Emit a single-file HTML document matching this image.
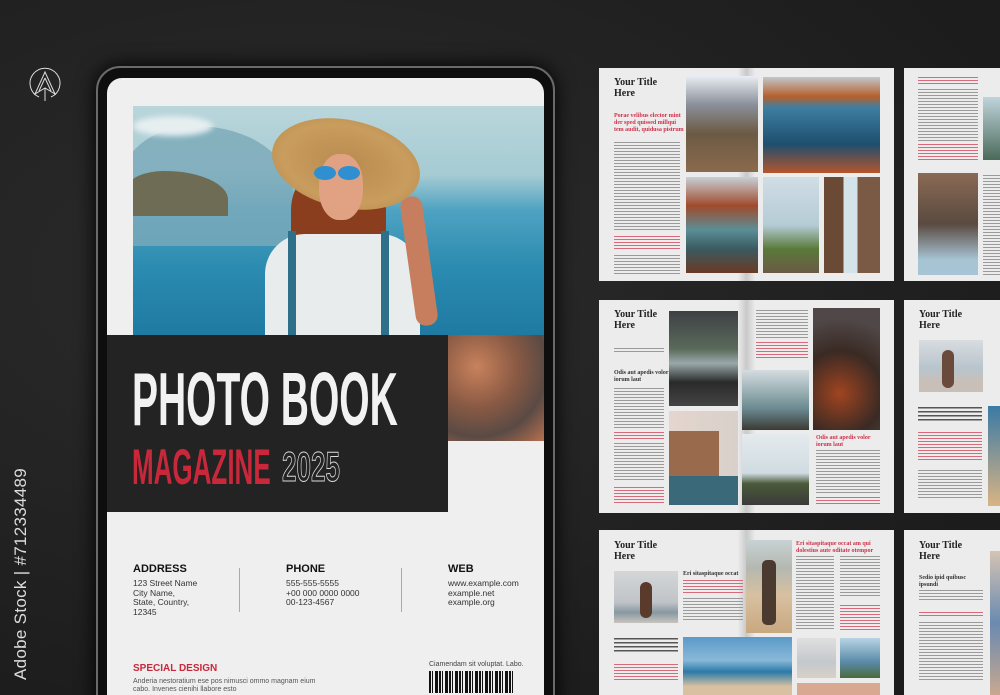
<!DOCTYPE html>
<html style="width:1000px;height:695px;overflow:hidden"><head><meta charset="utf-8"><style>
*{margin:0;padding:0;box-sizing:border-box}
body{width:1000px;height:695px;overflow:hidden;background:#232323;position:relative;font-family:"Liberation Sans",sans-serif}
.a{position:absolute}
.pg{position:absolute;background:#ececec}
.tx{position:absolute;background:repeating-linear-gradient(#9a9a9a 0 1px,transparent 1px 3px)}
.rt{position:absolute;background:repeating-linear-gradient(#d86a7c 0 1px,transparent 1px 3px)}
.bt{position:absolute;background:repeating-linear-gradient(#555 0 1.5px,transparent 1.5px 4px)}
.tt{position:absolute;font-family:"Liberation Serif",serif;font-weight:bold;font-size:10px;line-height:11px;color:#222}
.hd{position:absolute;font-family:"Liberation Serif",serif;font-weight:bold;font-size:6px;line-height:7px;color:#333}
.rh{position:absolute;font-family:"Liberation Serif",serif;font-weight:bold;font-size:6px;line-height:7px;color:#d0304a}
.p{position:absolute}
.big{position:absolute;font-family:"Liberation Sans",sans-serif;font-weight:bold;white-space:nowrap;transform-origin:0 0}
</style></head><body>
<div class="a" style="left:0;top:0;width:1000px;height:695px;background:radial-gradient(ellipse at 30% 40%,#2c2c2c,#1c1c1c 80%)"></div>
<svg class="a" style="left:28px;top:67px" width="34" height="36" viewBox="0 0 34 36"><g fill="none" stroke="#ddd" stroke-width="1"><path d="M11 30 A15 15 0 1 1 23 30"/><path d="M17 5 L7 27 L17 21 L27 27 Z"/><path d="M17 11 L11 24 M17 11 L23 24"/><path d="M17 21 V34"/></g></svg>
<div class="a" style="left:11px;top:680px;transform:rotate(-90deg);transform-origin:0 0;color:#ddd;font-size:17px;white-space:nowrap;width:230px;letter-spacing:.3px">Adobe Stock | #712334489</div>

<div class="a" style="left:96px;top:66px;width:459px;height:660px;border-radius:24px;background:#0e0e0e;border:2px solid #6a6a6a;box-shadow:0 0 20px #000"></div>
<div class="a" style="left:107px;top:78px;width:437px;height:640px;border-radius:15px;background:#efefef;overflow:hidden">
 <div class="a" style="left:26px;top:28px;width:411px;height:230px;background:linear-gradient(#b9d6db 0,#a6cbd3 30%,#4fa3c2 45%,#2b8bb0 70%,#1f7aa2 100%);overflow:hidden">
  <div class="a" style="left:-10px;top:20px;width:170px;height:120px;background:#7aa9b9;border-radius:60% 80% 0 0;opacity:.8"></div>
  <div class="a" style="left:0;top:10px;width:80px;height:20px;background:#e6eef0;border-radius:50%;filter:blur(3px)"></div>
  <div class="a" style="left:-5px;top:65px;width:100px;height:45px;background:#6e6c55;border-radius:40% 70% 0 0"></div>
  <div class="a" style="left:158px;top:60px;width:95px;height:110px;background:#8a3e1e;border-radius:40%"></div>
  <div class="a" style="left:132px;top:128px;width:155px;height:110px;background:#e8ecec;border-radius:40px 40px 0 0"></div>
  <div class="a" style="left:155px;top:125px;width:8px;height:105px;background:#2e6f8a"></div>
  <div class="a" style="left:248px;top:125px;width:8px;height:105px;background:#2e6f8a"></div>
  <div class="a" style="left:275px;top:90px;width:22px;height:130px;background:#c77e5e;border-radius:10px;transform:rotate(-8deg)"></div>
  <div class="a" style="left:138px;top:14px;width:150px;height:88px;background:radial-gradient(#b88a4e,#c99d5e 60%,#b48648);border-radius:50%;transform:rotate(12deg)"></div>
  <div class="a" style="left:186px;top:48px;width:44px;height:66px;background:#e0a283;border-radius:45%"></div>
  <div class="a" style="left:181px;top:60px;width:22px;height:14px;background:#2f8fd0;border-radius:50%"></div>
  <div class="a" style="left:205px;top:60px;width:22px;height:14px;background:#2f8fd0;border-radius:50%"></div>
 </div>
 <div class="a" style="left:341px;top:257px;width:96px;height:106px;background:radial-gradient(circle at 30% 30%,#c8825c,#8a5a44 40%,#5a4a44 70%,#b87050)"></div>
 <div class="a" style="left:0;top:257px;width:341px;height:177px;background:#232323"></div>
 <div class="big" style="left:25px;top:284px;color:#f2f2f2;font-size:75px;line-height:75px;transform:scaleX(.52)">PHOTO BOOK</div>
 <div class="big" style="left:25px;top:364px;color:#c8283a;font-size:50px;line-height:50px;transform:scaleX(.52)">MAGAZINE</div>
 <div class="big" style="left:175px;top:368px;color:transparent;-webkit-text-stroke:1px #ddd;font-size:42px;line-height:42px;transform:scaleX(.62)">2025</div>
 <div class="a" style="left:26px;top:485px;font-size:10px;line-height:13px;color:#333"><b style="font-size:11px;color:#111">ADDRESS</b><div style="margin-top:3px;line-height:9.5px;font-size:8.5px">123 Street Name<br>City Name,<br>State, Country,<br>12345</div></div>
 <div class="a" style="left:179px;top:485px;font-size:10px;line-height:13px;color:#333"><b style="font-size:11px;color:#111">PHONE</b><div style="margin-top:3px;line-height:9.5px;font-size:8.5px">555-555-5555<br>+00 000 0000 0000<br>00-123-4567</div></div>
 <div class="a" style="left:341px;top:485px;font-size:10px;line-height:13px;color:#333"><b style="font-size:11px;color:#111">WEB</b><div style="margin-top:3px;line-height:9.5px;font-size:8.5px">www.example.com<br>example.net<br>example.org</div></div>
 <div class="a" style="left:132px;top:490px;width:1px;height:44px;background:#aaa"></div>
 <div class="a" style="left:294px;top:490px;width:1px;height:44px;background:#aaa"></div>
 <div class="a" style="left:26px;top:585px;color:#c8283a;font-weight:bold;font-size:10px">SPECIAL DESIGN</div>
 <div class="a" style="left:26px;top:600px;color:#555;font-size:7px;line-height:8px">Anderia nestoratium ese pos nimusci ommo magnam eium<br>cabo. Invenes cienihi llabore esto</div>
 <div class="a" style="left:322px;top:583px;color:#444;font-size:7px">Ciamendam sit voluptat. Labo.</div>
 <div class="a" style="left:322px;top:593px;width:84px;height:22px;background:repeating-linear-gradient(90deg,#111 0 2px,transparent 2px 3px,#111 3px 4px,transparent 4px 6px,#111 6px 9px,transparent 9px 10px)"></div>
</div>

<!-- ROW 1 -->
<div class="pg" style="left:599px;top:68px;width:295px;height:213px;background:linear-gradient(90deg,#ececec 0,#ececec 47%,#c9c9c9 50%,#ececec 53%)"></div>
<div class="tt" style="left:614px;top:77px">Your Title<br>Here</div>
<div class="rh" style="left:614px;top:113px;width:70px">Porae velibus elector mint der sped quissed millqui tem audit, quidusa pistrum</div>
<div class="tx" style="left:614px;top:142px;width:66px;height:90px"></div>
<div class="rt" style="left:614px;top:236px;width:66px;height:14px"></div>
<div class="tx" style="left:614px;top:255px;width:66px;height:20px"></div>
<div class="p" style="left:686px;top:76px;width:72px;height:96px;background:linear-gradient(#e8eef2,#8a8f9a 30%,#6c5a44 60%,#8b6a4c)"></div>
<div class="p" style="left:686px;top:177px;width:72px;height:96px;background:linear-gradient(#c8d0d6,#a04a2c 30%,#5a8e96 55%,#3a5a60 75%,#6a3a24)"></div>
<div class="p" style="left:763px;top:77px;width:117px;height:96px;background:linear-gradient(#c0c8cc,#b8602c 20%,#3e7ea0 32%,#1e4e6e 70%,#b4552c)"></div>
<div class="p" style="left:763px;top:177px;width:56px;height:96px;background:linear-gradient(#d0dde4,#b5ccd6 50%,#5a7a3a 75%,#6a5a44)"></div>
<div class="p" style="left:824px;top:177px;width:56px;height:96px;background:linear-gradient(90deg,#6a4a34 0 35%,#d4e2ea 35% 60%,#7a5a44 60%)"></div>
<div class="pg" style="left:904px;top:68px;width:100px;height:213px"></div>
<div class="rt" style="left:918px;top:77px;width:60px;height:8px"></div>
<div class="tx" style="left:918px;top:89px;width:60px;height:52px"></div>
<div class="rt" style="left:918px;top:144px;width:60px;height:16px"></div>
<div class="p" style="left:918px;top:173px;width:60px;height:102px;background:linear-gradient(#8a6a54,#5a4a40 50%,#a7c4d4 85%)"></div>
<div class="p" style="left:983px;top:97px;width:17px;height:63px;background:linear-gradient(#c0d4dc,#4a6a5a)"></div>
<div class="tx" style="left:983px;top:175px;width:17px;height:100px"></div>

<!-- ROW 2 -->
<div class="pg" style="left:599px;top:300px;width:295px;height:213px;background:linear-gradient(90deg,#ececec 0,#ececec 47%,#c9c9c9 50%,#ececec 53%)"></div>
<div class="tt" style="left:614px;top:309px">Your Title<br>Here</div>
<div class="tx" style="left:614px;top:348px;width:50px;height:6px"></div>
<div class="hd" style="left:614px;top:370px;width:55px">Odis aut apedis volor iorum laut</div>
<div class="tx" style="left:614px;top:388px;width:50px;height:42px"></div>
<div class="rt" style="left:614px;top:432px;width:50px;height:8px"></div>
<div class="tx" style="left:614px;top:443px;width:50px;height:38px"></div>
<div class="rt" style="left:614px;top:487px;width:50px;height:18px"></div>
<div class="p" style="left:669px;top:311px;width:69px;height:95px;background:linear-gradient(#3e4044,#5a6a5a 40%,#9aa8aa 55%,#2a2a2a 75%,#444)"></div>
<div class="p" style="left:669px;top:411px;width:69px;height:94px;background:linear-gradient(90deg,#e4d6ce,#d8d0ca);"><div class="p" style="left:0;top:20px;width:50px;height:45px;background:#9a6a4c"></div><div class="p" style="left:0;top:65px;width:69px;height:29px;background:#3a6a7a"></div></div>
<div class="tx" style="left:756px;top:310px;width:52px;height:30px"></div>
<div class="rt" style="left:756px;top:342px;width:52px;height:18px"></div>
<div class="p" style="left:742px;top:370px;width:67px;height:60px;background:linear-gradient(#d4dce0,#8aa4a8 45%,#6a8890 65%,#3a3a34)"></div>
<div class="p" style="left:742px;top:434px;width:67px;height:71px;background:linear-gradient(#e4eaee,#d0dce2 55%,#4a5a3a 70%,#3a3a3a)"></div>
<div class="p" style="left:813px;top:308px;width:67px;height:122px;background:radial-gradient(circle at 40% 70%,#a04420,#3a2a24 45%,#504848 80%)"></div>
<div class="rh" style="left:816px;top:435px;width:64px">Odis aut apedis volor iorum laut</div>
<div class="tx" style="left:816px;top:450px;width:64px;height:44px"></div>
<div class="rt" style="left:816px;top:497px;width:64px;height:8px"></div>
<div class="pg" style="left:904px;top:300px;width:100px;height:213px"></div>
<div class="tt" style="left:919px;top:309px">Your Title<br>Here</div>
<div class="p" style="left:919px;top:340px;width:64px;height:52px;background:linear-gradient(#d8dce0,#b8c4cc 55%,#c8c0b8 80%)"></div>
<div class="p" style="left:942px;top:350px;width:12px;height:38px;background:#6a4a3a;border-radius:6px"></div>
<div class="bt" style="left:918px;top:407px;width:64px;height:15px"></div>
<div class="rt" style="left:918px;top:432px;width:64px;height:28px"></div>
<div class="tx" style="left:918px;top:470px;width:64px;height:30px"></div>
<div class="p" style="left:988px;top:406px;width:12px;height:100px;background:linear-gradient(#3a7aa4,#d8b484)"></div>

<!-- ROW 3 -->
<div class="pg" style="left:599px;top:530px;width:295px;height:170px;background:linear-gradient(90deg,#ececec 0,#ececec 47%,#c9c9c9 50%,#ececec 53%)"></div>
<div class="tt" style="left:614px;top:540px">Your Title<br>Here</div>
<div class="p" style="left:614px;top:571px;width:64px;height:52px;background:linear-gradient(#d4d6d8,#c0c4c8 60%,#8898a0 80%,#c8c4c0)"></div>
<div class="p" style="left:640px;top:582px;width:12px;height:36px;background:#5a3a2a;border-radius:6px"></div>
<div class="hd" style="left:683px;top:571px">Eri sitaspitaque occat</div>
<div class="rt" style="left:683px;top:580px;width:60px;height:15px"></div>
<div class="tx" style="left:683px;top:598px;width:60px;height:24px"></div>
<div class="bt" style="left:614px;top:638px;width:64px;height:16px"></div>
<div class="rt" style="left:614px;top:664px;width:64px;height:16px"></div>
<div class="p" style="left:683px;top:637px;width:109px;height:58px;background:linear-gradient(#5a9ac8,#8ab8d8 40%,#2a7aa8 60%,#d8c0a0 85%)"></div>
<div class="p" style="left:746px;top:540px;width:46px;height:93px;background:linear-gradient(#c8d2d4,#b4b8b0 30%,#d8c0a0 60%,#c8a880)"></div>
<div class="p" style="left:762px;top:560px;width:14px;height:65px;background:#4a3a30;border-radius:5px"></div>
<div class="rh" style="left:796px;top:541px;width:85px">Eri sitaspitaque occat am qui dolestius aute oditate otempor</div>
<div class="tx" style="left:796px;top:556px;width:38px;height:75px"></div>
<div class="tx" style="left:840px;top:556px;width:40px;height:40px"></div>
<div class="rt" style="left:840px;top:605px;width:40px;height:26px"></div>
<div class="p" style="left:797px;top:638px;width:39px;height:40px;background:linear-gradient(#e0e0e0,#c4c8cc 60%,#d8d0c8)"></div>
<div class="p" style="left:840px;top:638px;width:40px;height:40px;background:linear-gradient(#b8d4e4,#5a8aa8 60%,#4a6a3a)"></div>
<div class="p" style="left:797px;top:683px;width:83px;height:12px;background:#d8a890"></div>
<div class="pg" style="left:904px;top:530px;width:100px;height:170px"></div>
<div class="tt" style="left:919px;top:540px">Your Title<br>Here</div>
<div class="hd" style="left:919px;top:575px;width:60px">Sedio ipid quibusc ipsundi</div>
<div class="tx" style="left:919px;top:590px;width:64px;height:12px"></div>
<div class="rt" style="left:919px;top:612px;width:64px;height:6px"></div>
<div class="tx" style="left:919px;top:622px;width:64px;height:60px"></div>
<div class="p" style="left:990px;top:551px;width:10px;height:144px;background:linear-gradient(#d4c4b4,#6a8ab0 50%,#c8a890)"></div>
</body></html>
